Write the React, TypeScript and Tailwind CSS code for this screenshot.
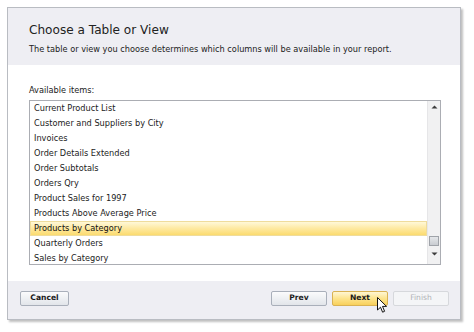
const items = [
  "Current Product List",
  "Customer and Suppliers by City",
  "Invoices",
  "Order Details Extended",
  "Order Subtotals",
  "Orders Qry",
  "Product Sales for 1997",
  "Products Above Average Price",
  "Products by Category",
  "Quarterly Orders",
  "Sales by Category",
];

const SELECTED = "Products by Category";

function WizardButton({ label, variant }: { label: string; variant: "normal" | "primary" | "disabled" }) {
  const styles = {
    normal: "border-[#a9afba] bg-gradient-to-b from-[#fbfbfc] via-[#eef0f3] to-[#e2e5ea] text-[#1b1b1b] font-bold",
    primary: "border-[#d9b253] bg-gradient-to-b from-[#fff6d2] via-[#fde48c] to-[#f8d05a] text-[#1b1b1b] font-bold",
    disabled: "border-[#d6d8dc] bg-[#f4f5f7] text-[#b0b2b6]",
  }[variant];
  return (
    <div className={`h-[15px] flex items-center justify-center border rounded-[2px] text-[7.6px] ${styles}`}>
      {label}
    </div>
  );
}

export default function App() {
  return (
    <div className="w-[474px] h-[332px] bg-white overflow-hidden relative font-['DejaVu_Sans',sans-serif]">
      <div className="ml-[7px] mt-[7px] w-[454px] h-[313px] flex flex-col border border-[#b9bcc2] shadow-[2px_2px_2px_rgba(0,0,0,0.25)]">
        {/* Header */}
        <div className="h-[57px] bg-[#eeeef3] pl-[21px] pt-[13px] flex flex-col">
          <div className="text-[12.1px] leading-[18px] text-[#222]">Choose a Table or View</div>
          <div className="text-[8.2px] leading-[12px] mt-[4px] text-[#222]">
            The table or view you choose determines which columns will be available in your report.
          </div>
        </div>

        {/* Body */}
        <div className="flex-1 bg-white pl-[21px] pt-[20px]">
          <div className="text-[8.2px] leading-[11px] text-[#222]">Available items:</div>
          <div className="mt-[4px] w-[412px] h-[165px] border border-[#abadb3] flex overflow-hidden">
            <div className="flex-1 pl-[3px] overflow-hidden">
              {items.map((item) => (
                <div
                  key={item}
                  className={
                    item === SELECTED
                      ? "h-[15px] -ml-[3px] pl-[3px] flex items-center text-[8.2px] text-[#111] border border-[#efdc9c] bg-gradient-to-b from-[#fff8d8] via-[#fee9a0] to-[#fbdb6e]"
                      : "h-[15px] flex items-center text-[8.2px] text-[#222] border border-transparent"
                  }
                >
                  {item}
                </div>
              ))}
            </div>
            {/* Scrollbar */}
            <div className="w-[13px] bg-[#f1f1f2] border-l border-[#e6e6e8] flex flex-col items-center">
              <svg width="7" height="4" viewBox="0 0 7 4" className="mt-[4px]">
                <path d="M0.5 3.5 L3.5 0.5 L6.5 3.5 Z" fill="#3c3c3c" />
              </svg>
              <div className="flex-1" />
              <div className="w-[10px] h-[10px] border border-[#9fa3a9] bg-gradient-to-b from-[#e5e7ea] to-[#c9ccd1] mb-[6px]" />
              <svg width="7" height="4" viewBox="0 0 7 4" className="mb-[8px]">
                <path d="M0.5 0.5 L3.5 3.5 L6.5 0.5 Z" fill="#3c3c3c" />
              </svg>
            </div>
          </div>
        </div>

        {/* Footer */}
        <div className="h-[38px] bg-[#eeeef3] flex items-center pl-[12px] pr-[11px] pb-[4px]">
          <div className="w-[49px]">
            <WizardButton label="Cancel" variant="normal" />
          </div>
          <div className="flex-1" />
          <div className="flex gap-[5px]">
            <div className="w-[56px]">
              <WizardButton label="Prev" variant="normal" />
            </div>
            <div className="w-[56px] relative">
              <WizardButton label="Next" variant="primary" />
              <svg width="11" height="17" viewBox="0 0 11 17" className="absolute left-[45px] top-[6px]">
                <path d="M0.5 0.5 L0.5 13 L3.5 10.2 L5.6 15.2 L7.6 14.3 L5.5 9.4 L9.5 9.4 Z" fill="#fff" stroke="#111" strokeWidth="1" strokeLinejoin="round" />
              </svg>
            </div>
            <div className="w-[56px]">
              <WizardButton label="Finish" variant="disabled" />
            </div>
          </div>
        </div>
      </div>
    </div>
  );
}
